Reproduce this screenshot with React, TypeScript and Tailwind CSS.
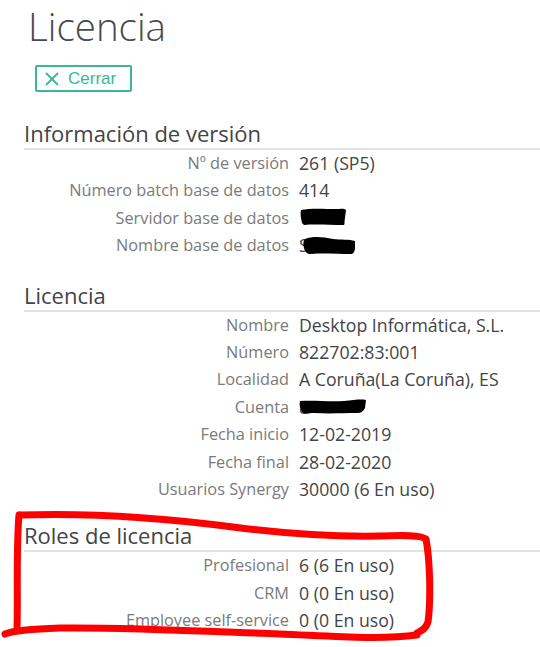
import React from "react";

const Row = ({ label, children }: { label: string; children?: React.ReactNode }) => (
  <>
    <div className="text-right text-[#7a7a7a] text-[16.3px] whitespace-nowrap">{label}</div>
    <div className="relative text-[#444] text-[17.7px] whitespace-nowrap">{children}</div>
  </>
);

const Section = ({
  title,
  className,
  children,
}: {
  title: string;
  className?: string;
  children: React.ReactNode;
}) => (
  <div className={className}>
    <div className="text-[22px] leading-[28px] text-[#444] pb-[1px] border-b-2 border-[#e2e2e2]">
      {title}
    </div>
    <div className="grid grid-cols-[265px_1fr] gap-x-[10px] auto-rows-[27.4px] leading-[27.4px]">
      {children}
    </div>
  </div>
);

const Blob = ({ className, d, w, h }: { className: string; d: string; w: number; h: number }) => (
  <svg className={"absolute " + className} width={w} height={h} viewBox={`0 0 ${w} ${h}`}>
    <path d={d} fill="#000" />
  </svg>
);

export default function App() {
  return (
    <div className="relative w-full min-h-[647px] bg-white overflow-hidden font-['Open_Sans',sans-serif]">
      <div className="pl-[28px] pt-[4px] text-[38.5px] leading-[44px] font-light text-[#4a4a4a]">Licencia</div>

      <div className="pl-[35px] mt-[17px]">
        <button className="flex items-center w-[97px] h-[27px] border-2 border-[#38b995] rounded-[2px] text-[#38b995] font-['Liberation_Sans',Arial,sans-serif] text-[17px] pl-[8px]">
          <svg width="14" height="14" viewBox="0 0 14 14" className="mr-[9px]">
            <path d="M1.5 1.5 L12.5 12.5 M12.5 1.5 L1.5 12.5" stroke="#38b995" strokeWidth="1.8" strokeLinecap="round" />
          </svg>
          Cerrar
        </button>
      </div>

      <div className="pl-[24px]">
        <Section title="Información de versión" className="mt-[27px]">
          <Row label="Nº de versión">261 (SP5)</Row>
          <Row label="Número batch base de datos">414</Row>
          <Row label="Servidor base de datos">
            <Blob
              className="left-[1px] top-[3px]"
              w={47}
              h={18}
              d="M1 2 C10 0 25 1 35 1 C40 1 44 0 46 2 L45 10 C44 14 45 16 44 17 C30 17 15 16 4 17 L2 15 C1 10 0 6 1 2 Z"
            />
          </Row>
          <Row label="Nombre base de datos">
            <span>S</span>
            <Blob
              className="left-[4px] top-[4px]"
              w={53}
              h={19}
              d="M2 3 C10 0 20 1 30 3 C38 4 46 3 52 5 L52 13 C51 17 50 18 48 18 C35 18 20 17 8 18 C4 18 2 16 1 12 C0 8 0 5 2 3 Z"
            />
          </Row>
        </Section>

        <Section title="Licencia" className="mt-[21px]">
          <Row label="Nombre">Desktop Informática, S.L.</Row>
          <Row label="Número">822702:83:001</Row>
          <Row label="Localidad">A Coruña(La Coruña), ES</Row>
          <Row label="Cuenta">
            <span>8</span>
            <Blob
              className="left-[0px] top-[5px]"
              w={68}
              h={17}
              d="M1 2 C15 1 30 3 45 2 C55 1 62 0 67 1 L66 9 C64 13 62 14 58 14 C45 14 30 15 15 14 C10 14 6 16 3 13 C1 10 0 6 1 2 Z"
            />
          </Row>
          <Row label="Fecha inicio">12-02-2019</Row>
          <Row label="Fecha final">28-02-2020</Row>
          <Row label="Usuarios Synergy">30000 (6 En uso)</Row>
        </Section>

        <Section title="Roles de licencia" className="mt-[18px]">
          <Row label="Profesional">6 (6 En uso)</Row>
          <Row label="CRM">0 (0 En uso)</Row>
          <Row label="Employee self-service">0 (0 En uso)</Row>
        </Section>
      </div>

      <svg className="absolute left-0 top-0 pointer-events-none" width="540" height="647" viewBox="0 0 540 647">
        <g fill="none" stroke="#ff0000" strokeWidth="7" strokeLinecap="round" strokeLinejoin="round">
          <path d="M20 515 C80 513 150 516 233 527 C280 533 330 537 380 536 C405 535 420 535 426 539 C430 560 431 600 428 622 C426 629 421 631 417 633" />
          <path d="M417 635 C380 640 330 636 280 634 C200 631 120 627 60 628 C30 629 12 631 5 634" />
          <path d="M19 515 C16 550 18 600 17 628" />
        </g>
      </svg>
    </div>
  );
}
